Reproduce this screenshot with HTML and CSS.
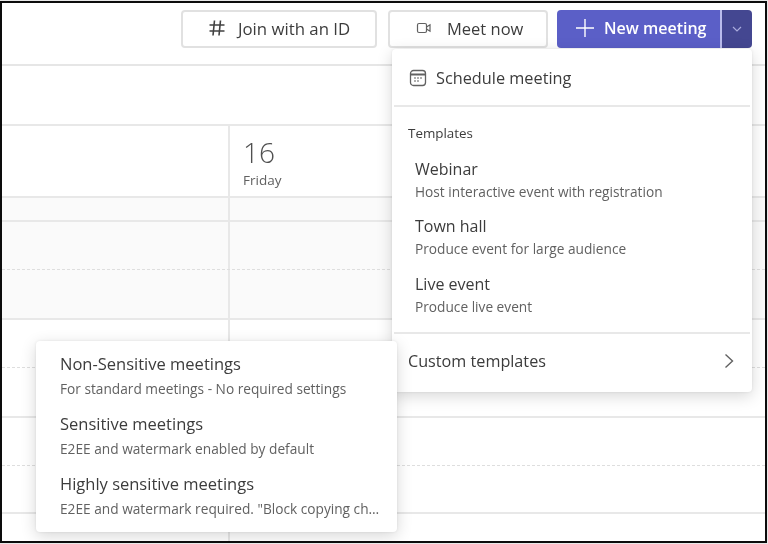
FILE: index.html
```html
<!DOCTYPE html>
<html lang="en">
<head>
<meta charset="utf-8">
<title>Calendar</title>
<link rel="stylesheet" href="styles.css">
</head>
<body>
<div class="frame">
  <header class="toolbar">
    <button class="btn btn-join">
      <svg class="ico-hash" viewBox="0 0 18 18" width="18" height="18"><path d="M6.5 1.5 5 16.5M12.5 1.5 11 16.5M1.5 6h15M1.5 12h15" fill="none" stroke="#424242" stroke-width="1.6"/></svg>
      <span>Join with an ID</span>
    </button>
    <button class="btn btn-meet">
      <svg viewBox="0 0 16 14" width="16" height="14"><rect x="1.5" y="2.5" width="9" height="9" rx="1.5" fill="none" stroke="#616161" stroke-width="1.2"/><path d="M10.5 6 14 3.8v6.4L10.5 8" fill="none" stroke="#616161" stroke-width="1.2"/></svg>
      <span>Meet now</span>
    </button>
    <div class="split">
      <button class="split-main">
        <svg viewBox="0 0 20 20" width="20" height="20"><path d="M10 1v18M1 10h18" stroke="#fff" stroke-width="1.4" fill="none"/></svg>
        <span>New meeting</span>
      </button>
      <button class="split-drop">
        <svg viewBox="0 0 10 6" width="10" height="6"><path d="M1 1l4 4 4-4" stroke="#a9abdc" stroke-width="1.2" fill="none"/></svg>
      </button>
    </div>
  </header>

  <div class="row row-blank"></div>
  <div class="row row-head">
    <div class="cell cell-left"></div>
    <div class="cell day"><div class="day-num">16</div><div class="day-name">Friday</div></div>
  </div>
  <div class="row row-a shade"><div class="cell cell-left"></div><div class="cell"></div></div>
  <div class="row row-b shade dashed"><div class="cell cell-left"></div><div class="cell"></div></div>
  <div class="row row-c shade"><div class="cell cell-left"></div><div class="cell"></div></div>
  <div class="row row-b dashed"><div class="cell cell-left"></div><div class="cell"></div></div>
  <div class="row row-c"><div class="cell cell-left"></div><div class="cell"></div></div>
  <div class="row row-b dashed"><div class="cell cell-left"></div><div class="cell"></div></div>
  <div class="row row-b"><div class="cell cell-left"></div><div class="cell"></div></div>
  <div class="row row-end"><div class="cell cell-left"></div><div class="cell"></div></div>

  <div class="menu menu-new">
    <div class="schedule">
      <svg viewBox="0 0 18 18" width="18" height="18"><rect x="1.5" y="1.5" width="15" height="15" rx="3" fill="none" stroke="#616161" stroke-width="1.3"/><path d="M2 5.5h14" stroke="#616161" stroke-width="2"/><path d="M5 9h2M8 9h2M11 9h2M5 12h2M8 12h2" stroke="#616161" stroke-width="1.2"/></svg>
      <span>Schedule meeting</span>
    </div>
    <div class="section">
      <div class="section-title">Templates</div>
      <div class="item item-t"><div class="item-name">Webinar</div><div class="item-sub">Host interactive event with registration</div></div>
      <div class="item item-t"><div class="item-name">Town hall</div><div class="item-sub">Produce event for large audience</div></div>
      <div class="item item-t"><div class="item-name">Live event</div><div class="item-sub">Produce live event</div></div>
    </div>
    <div class="custom">
      <span>Custom templates</span>
      <svg viewBox="0 0 10 16" width="10" height="16"><path d="M1.5 1.5 8.5 8l-7 6.5" stroke="#616161" stroke-width="1.4" fill="none"/></svg>
    </div>
  </div>

  <div class="menu menu-custom">
    <div class="item item-c"><div class="item-name">Non-Sensitive meetings</div><div class="item-sub">For standard meetings - No required settings</div></div>
    <div class="item item-c"><div class="item-name">Sensitive meetings</div><div class="item-sub">E2EE and watermark enabled by default</div></div>
    <div class="item item-c"><div class="item-name">Highly sensitive meetings</div><div class="item-sub">E2EE and watermark required. "Block copying chat" is turned on</div></div>
  </div>
</div>
</body>
</html>
```
FILE: styles.css
```css
* { box-sizing: border-box; }
html, body { margin: 0; padding: 0; background: #e8e8e8; }
body { width: 768px; height: 544px; overflow: hidden; font-family: "Open Sans", "Noto Sans", sans-serif; color: #3c3c3c; }
.frame {
  position: relative;
  width: 767px;
  height: 542px;
  margin-top: 1px;
  border: 2px solid #0c0c0c;
  background: #fff;
  overflow: hidden;
  filter: blur(0.45px);
}
.toolbar {
  height: 63px;
  display: flex;
  justify-content: flex-end;
  align-items: flex-start;
  gap: 9px;
  padding: 7px 13px 0 0;
  border-bottom: 2px solid #e6e6e6;
}
button { font: inherit; color: inherit; cursor: pointer; }
.btn {
  height: 38px;
  display: flex;
  align-items: center;
  background: #fff;
  border: 2px solid #e1e1e1;
  border-radius: 4px;
  font-weight: 500;
  padding: 0 0 2px;
}
.btn-join { width: 196px; gap: 12px; margin-right: 2px; padding-left: 25px; font-size: 16.8px; }
.btn-meet { width: 160px; gap: 15px; padding-left: 26px; font-size: 16.5px; }
.split { display: flex; height: 38px; width: 195px; border-radius: 4px; overflow: hidden; }
.split-main {
  flex: 1;
  display: flex;
  align-items: center;
  gap: 9px;
  padding: 0 0 2px 18px;
  border: 0;
  border-right: 2px solid #b9bbec;
  background: #5b5fc7;
  color: #fff;
  font-size: 16px;
  font-weight: 600;
}
.split-drop {
  width: 30px;
  display: flex;
  align-items: center;
  justify-content: center;
  border: 0;
  padding: 0;
  background: #444791;
}
.row { display: flex; border-bottom: 2px solid #e8e8e8; }
.row-blank { height: 60px; }
.row-head { height: 72px; }
.row-a { height: 24px; }
.row-b { height: 48px; }
.row-c { height: 50px; }
.row-end { height: 40px; border-bottom: 0; }
.shade { background: #fafafa; }
.dashed { border-bottom: 1px dashed #dedede; }
.cell-left { width: 228px; border-right: 2px solid #e8e8e8; flex: none; }
.cell { min-width: 0; }
.day { padding: 7px 0 0 13px; }
.day-num { font-size: 28px; line-height: 38px; font-weight: 300; color: #505050; }
.day-name { font-size: 13.5px; line-height: 18px; color: #616161; }
.menu {
  position: absolute;
  background: #fff;
  border-radius: 4px;
  box-shadow: 0 4px 16px rgba(0, 0, 0, 0.16), 0 0 3px rgba(0, 0, 0, 0.08);
}
.menu-new { left: 390px; top: 46px; width: 360px; height: 343px; }
.schedule {
  height: 58px;
  margin: 0 2px;
  display: flex;
  align-items: center;
  gap: 9px;
  padding: 1px 0 0 15px;
  border-bottom: 2px solid #e8e8e8;
  font-size: 16.3px;
  font-weight: 500;
}
.section { height: 227px; padding-top: 17px; margin: 0 2px; border-bottom: 2px solid #e8e8e8; }
.section-title { font-size: 13.4px; line-height: 18px; font-weight: 500; padding-left: 14px; margin-bottom: 14.7px; }
.item-t { padding-left: 21px; height: 57.5px; }
.item-name { font-size: 16px; line-height: 24px; font-weight: 500; white-space: nowrap; }
.item-sub { font-size: 13.7px; line-height: 20px; margin-top: 1px; color: #616161; white-space: nowrap; overflow: hidden; text-overflow: ellipsis; }
.custom {
  height: 54px;
  display: flex;
  align-items: center;
  justify-content: space-between;
  padding: 0 18px 0 16px;
  font-size: 16.2px;
  font-weight: 500;
}
.menu-custom { left: 34px; top: 338px; width: 361px; height: 191px; padding: 11px 14px 0 24px; }
.item-c { height: 60px; }
.item-c .item-name { font-size: 16.5px; }
.item-c .item-sub { margin-top: 3px; }
```
